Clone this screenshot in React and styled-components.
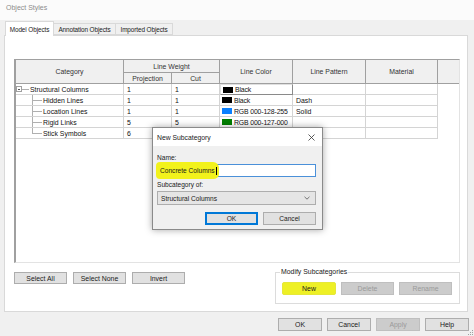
import React from "react";
import styled, { createGlobalStyle } from "styled-components";

const GlobalStyle = createGlobalStyle`
  html, body { margin: 0; padding: 0; background: #f0f0f0; }
  body {
    font-family: "Liberation Sans", Arial, sans-serif;
    font-size: 6.9px;
    color: #1a1a1a;
  }
  * { box-sizing: border-box; }
`;

const COLS = "108px 48px 48px 73px 73px 72px 1fr";

const Window = styled.div`
  position: relative;
  width: 474px;
  height: 336px;
  background: #f0f0f0;
  display: flex;
  flex-direction: column;
  overflow: hidden;
`;

const TitleBar = styled.div`
  height: 20px;
  background: #fbfbfb;
  padding: 4px 0 0 6px;
  color: #8c8c8c;
  line-height: 8px;
  font-size: 7px;
`;

const TabStrip = styled.div`
  height: 15px;
  display: flex;
  align-items: flex-end;
  padding-left: 5px;
`;

const Tab = styled.div`
  position: relative;
  z-index: ${(p) => (p.$active ? 2 : 1)};
  width: ${(p) => p.$w}px;
  height: ${(p) => (p.$active ? 15 : 12)}px;
  margin-bottom: ${(p) => (p.$active ? "-1px" : "0")};
  margin-left: ${(p) => (p.$first ? "0" : "-1px")};
  display: flex;
  align-items: center;
  justify-content: center;
  background: ${(p) => (p.$active ? "#fff" : "#f0f0f0")};
  border: 1px solid #d9d9d9;
  border-bottom: ${(p) => (p.$active ? "none" : "1px solid #d9d9d9")};
  white-space: nowrap;
  font-size: 6.4px;
  letter-spacing: -0.1px;
`;

const Panel = styled.div`
  margin-left: 4px;
  width: 464px;
  height: 277px;
  background: #fff;
  border: 1px solid #d9d9d9;
  padding: 23px 0 0 9px;
  display: flex;
  flex-direction: column;
`;

const Grid = styled.div`
  width: 446px;
  height: 204px;
  border-top: 1px solid #a0a0a0;
  border-left: 2px solid #a0a0a0;
  border-right: 1px solid #e3e3e3;
  border-bottom: 1px solid #e3e3e3;
  background: #fff;
`;

const HeaderGrid = styled.div`
  display: grid;
  grid-template-columns: ${COLS};
  grid-template-rows: 13px 11px;
`;

const HeadCell = styled.div`
  grid-column: ${(p) => p.$col};
  grid-row: ${(p) => p.$row};
  background: #f0f0f0;
  border-right: ${(p) => (p.$edge ? "none" : "1px solid #a0a0a0")};
  border-bottom: 1px solid #a0a0a0;
  display: flex;
  align-items: center;
  justify-content: center;
  color: #333;
  white-space: nowrap;
`;

const DataRow = styled.div`
  display: grid;
  grid-template-columns: ${COLS};
  height: 11px;
`;

const Cell = styled.div`
  display: flex;
  align-items: center;
  padding-left: ${(p) => (p.$pad != null ? p.$pad : 3)}px;
  border-right: ${(p) => (p.$blank ? "none" : "1px solid #d4d4d4")};
  border-bottom: ${(p) => (p.$blank ? "none" : "1px solid #d4d4d4")};
  white-space: nowrap;
  overflow: hidden;
  color: #111;
`;

const ColorCell = styled(Cell)`
  padding-left: 2px;
  letter-spacing: -0.15px;
  border-right: 1px solid ${(p) => (p.$raised ? "#8a8a8a" : "#d4d4d4")};
  border-bottom: 1px solid ${(p) => (p.$raised ? "#8a8a8a" : "#d4d4d4")};
  border-left: ${(p) => (p.$raised ? "1px solid #e0e0e0" : "none")};
  border-top: ${(p) => (p.$raised ? "1px solid #e0e0e0" : "none")};
`;

const Swatch = styled.span`
  width: 10px;
  height: 6px;
  margin-right: 2px;
  background: ${(p) => p.$color};
  flex: none;
`;

const Expander = styled.span`
  position: relative;
  width: 6px;
  height: 6px;
  border: 1px solid #a0a0a0;
  flex: none;
  &::after {
    content: "";
    position: absolute;
    left: 1px;
    right: 1px;
    top: 1.5px;
    height: 1px;
    background: #555;
  }
`;

const HLine = styled.span`
  width: 7px;
  height: 1px;
  margin-right: 1px;
  background: #b0b0b0;
  flex: none;
`;

const Branch = styled.span`
  width: 10px;
  height: 11px;
  margin-right: 1px;
  flex: none;
  align-self: flex-start;
  background:
    linear-gradient(#b0b0b0, #b0b0b0) left top / 1px ${(p) => (p.$last ? "6px" : "100%")} no-repeat,
    linear-gradient(#b0b0b0, #b0b0b0) left 5px / 100% 1px no-repeat;
`;

const BottomRow = styled.div`
  width: 446px;
  margin-top: 9px;
  display: flex;
  justify-content: space-between;
  align-items: flex-start;
`;

const ButtonRow = styled.div`
  display: flex;
  gap: ${(p) => (p.$gap != null ? p.$gap : 5)}px;
  justify-content: ${(p) => p.$justify || "flex-start"};
  margin-top: ${(p) => p.$mt || 0}px;
`;

const Button = styled.div`
  width: ${(p) => p.$w || 53}px;
  height: ${(p) => p.$h || 12}px;
  display: flex;
  align-items: center;
  justify-content: center;
  background: ${(p) => (p.$marker ? "#eef025" : p.$disabled ? "#cccccc" : "#e1e1e1")};
  border: ${(p) => (p.$default ? "2px" : "1px")} solid
    ${(p) =>
      p.$marker ? "#e6e83a" : p.$default ? "#0078d7" : p.$disabled ? "#bfbfbf" : "#adadad"};
  border-radius: ${(p) => (p.$marker ? "2px" : "0")};
  color: ${(p) => (p.$disabled ? "#9a9a9a" : "#1a1a1a")};
  white-space: nowrap;
`;

const GroupBox = styled.fieldset`
  width: 185px;
  margin: -4px 0 0 0;
  padding: 6px 6px 8px 6px;
  border: 1px solid #dcdcdc;
  min-width: 0;
`;

const Legend = styled.legend`
  padding: 0 1px;
  margin-left: -2px;
  line-height: 8px;
  color: #1a1a1a;
`;

const Footer = styled.div`
  flex: 1;
  padding: 6px 5px 0 0;
`;

const Grip = styled.svg`
  position: absolute;
  right: 1px;
  bottom: 1px;
`;

const Dialog = styled.div`
  position: absolute;
  left: 152px;
  top: 127px;
  width: 171px;
  height: 103px;
  background: #f0f0f0;
  border: 1px solid #8a8a8a;
  box-shadow: 0 0 7px rgba(0, 0, 0, 0.35);
  display: flex;
  flex-direction: column;
  font-size: 6.6px;
  z-index: 5;
`;

const DialogTitle = styled.div`
  height: 18px;
  background: #fff;
  display: flex;
  align-items: center;
  justify-content: space-between;
  padding: 0 7px 0 4px;
  color: #1a1a1a;
  font-size: 6.8px;
`;

const DialogBody = styled.div`
  display: flex;
  flex-direction: column;
  padding: 0 6px 0 4px;
`;

const Label = styled.div`
  margin-top: ${(p) => p.$mt}px;
  line-height: 10px;
  height: 10px;
`;

const TextBox = styled.div`
  margin-top: 1px;
  height: 13px;
  background: #fff;
  border: 1px solid #4a90d9;
  display: flex;
  align-items: center;
  padding-left: 1px;
`;

const Marker = styled.span`
  display: inline-flex;
  align-items: center;
  height: 17px;
  margin-left: -3px;
  padding: 0 2px 0 4px;
  background: #f2f21c;
  border-radius: 4px 6px 5px 4px;
`;

const Caret = styled.span`
  width: 1px;
  height: 8px;
  margin-left: 1px;
  background: #000;
`;

const Select = styled.div`
  margin-top: 1px;
  height: 14px;
  background: #e5e5e5;
  border: 1px solid #adadad;
  display: flex;
  align-items: center;
  justify-content: space-between;
  padding: 0 5px 0 3px;
`;

const rows = [
  { name: "Structural Columns", root: true, proj: "1", cut: "1", color: "#000", colorName: "Black", pattern: "", raised: true },
  { name: "Hidden Lines", proj: "1", cut: "1", color: "#000", colorName: "Black", pattern: "Dash" },
  { name: "Location Lines", proj: "1", cut: "1", color: "#0a80ff", colorName: "RGB 000-128-255", pattern: "Solid" },
  { name: "Rigid Links", proj: "5", cut: "5", color: "#007f00", colorName: "RGB 000-127-000", pattern: "" },
  { name: "Stick Symbols", proj: "6", cut: "", color: "", colorName: "", pattern: "", last: true },
];

const CategoryCell = ({ row }) =>
  row.root ? (
    <Cell $pad={0}>
      <Expander />
      <HLine />
      {row.name}
    </Cell>
  ) : (
    <Cell $pad={16}>
      <Branch $last={row.last} />
      {row.name}
    </Cell>
  );

export default function App() {
  return (
    <>
      <GlobalStyle />
      <Window>
        <TitleBar>Object Styles</TitleBar>
        <TabStrip>
          <Tab $active $first $w={49}>Model Objects</Tab>
          <Tab $w={63}>Annotation Objects</Tab>
          <Tab $w={58}>Imported Objects</Tab>
        </TabStrip>
        <Panel>
          <Grid>
            <HeaderGrid>
              <HeadCell $col="1" $row="1 / 3">Category</HeadCell>
              <HeadCell $col="2 / 4" $row="1">Line Weight</HeadCell>
              <HeadCell $col="2" $row="2">Projection</HeadCell>
              <HeadCell $col="3" $row="2">Cut</HeadCell>
              <HeadCell $col="4" $row="1 / 3">Line Color</HeadCell>
              <HeadCell $col="5" $row="1 / 3">Line Pattern</HeadCell>
              <HeadCell $col="6" $row="1 / 3">Material</HeadCell>
              <HeadCell $col="7" $row="1 / 3" $edge />
            </HeaderGrid>
            {rows.map((r) => (
              <DataRow key={r.name}>
                <CategoryCell row={r} />
                <Cell>{r.proj}</Cell>
                <Cell>{r.cut}</Cell>
                <ColorCell $raised={r.raised}>
                  {r.color && <Swatch $color={r.color} />}
                  {r.colorName}
                </ColorCell>
                <Cell>{r.pattern}</Cell>
                <Cell />
                <Cell $blank />
              </DataRow>
            ))}
          </Grid>
          <BottomRow>
            <ButtonRow $gap={6}>
              <Button>Select All</Button>
              <Button>Select None</Button>
              <Button>Invert</Button>
            </ButtonRow>
            <GroupBox>
              <Legend>Modify Subcategories</Legend>
              <ButtonRow>
                <Button $w={54} $h={13} $marker>New</Button>
                <Button $h={13} $disabled>Delete</Button>
                <Button $h={13} $disabled>Rename</Button>
              </ButtonRow>
            </GroupBox>
          </BottomRow>
        </Panel>
        <Footer>
          <ButtonRow $justify="flex-end">
            <Button $w={44} $h={13}>OK</Button>
            <Button $w={44} $h={13}>Cancel</Button>
            <Button $w={44} $h={13} $disabled>Apply</Button>
            <Button $w={44} $h={13}>Help</Button>
          </ButtonRow>
        </Footer>
        <Grip width="5" height="5" viewBox="0 0 5 5">
          <rect x="4" y="0" width="1" height="1" fill="#a0a0a0" />
          <rect x="2" y="2" width="1" height="1" fill="#a0a0a0" />
          <rect x="4" y="2" width="1" height="1" fill="#a0a0a0" />
          <rect x="0" y="4" width="1" height="1" fill="#a0a0a0" />
          <rect x="2" y="4" width="1" height="1" fill="#a0a0a0" />
          <rect x="4" y="4" width="1" height="1" fill="#a0a0a0" />
        </Grip>

        <Dialog>
          <DialogTitle>
            <span>New Subcategory</span>
            <svg width="7" height="7" viewBox="0 0 7 7">
              <path d="M0.5 0.5 L6.5 6.5 M6.5 0.5 L0.5 6.5" stroke="#333" strokeWidth="0.8" fill="none" />
            </svg>
          </DialogTitle>
          <DialogBody>
            <Label $mt={7}>Name:</Label>
            <TextBox>
              <Marker>
                Concrete Columns
                <Caret />
              </Marker>
            </TextBox>
            <Label $mt={3}>Subcategory of:</Label>
            <Select>
              <span>Structural Columns</span>
              <svg width="6" height="4" viewBox="0 0 6 4">
                <path d="M0.5 0.8 L3 3.2 L5.5 0.8" stroke="#555" strokeWidth="0.8" fill="none" />
              </svg>
            </Select>
            <ButtonRow $justify="flex-end" $mt={7}>
              <Button $h={13} $default>OK</Button>
              <Button $h={13}>Cancel</Button>
            </ButtonRow>
          </DialogBody>
        </Dialog>
      </Window>
    </>
  );
}
